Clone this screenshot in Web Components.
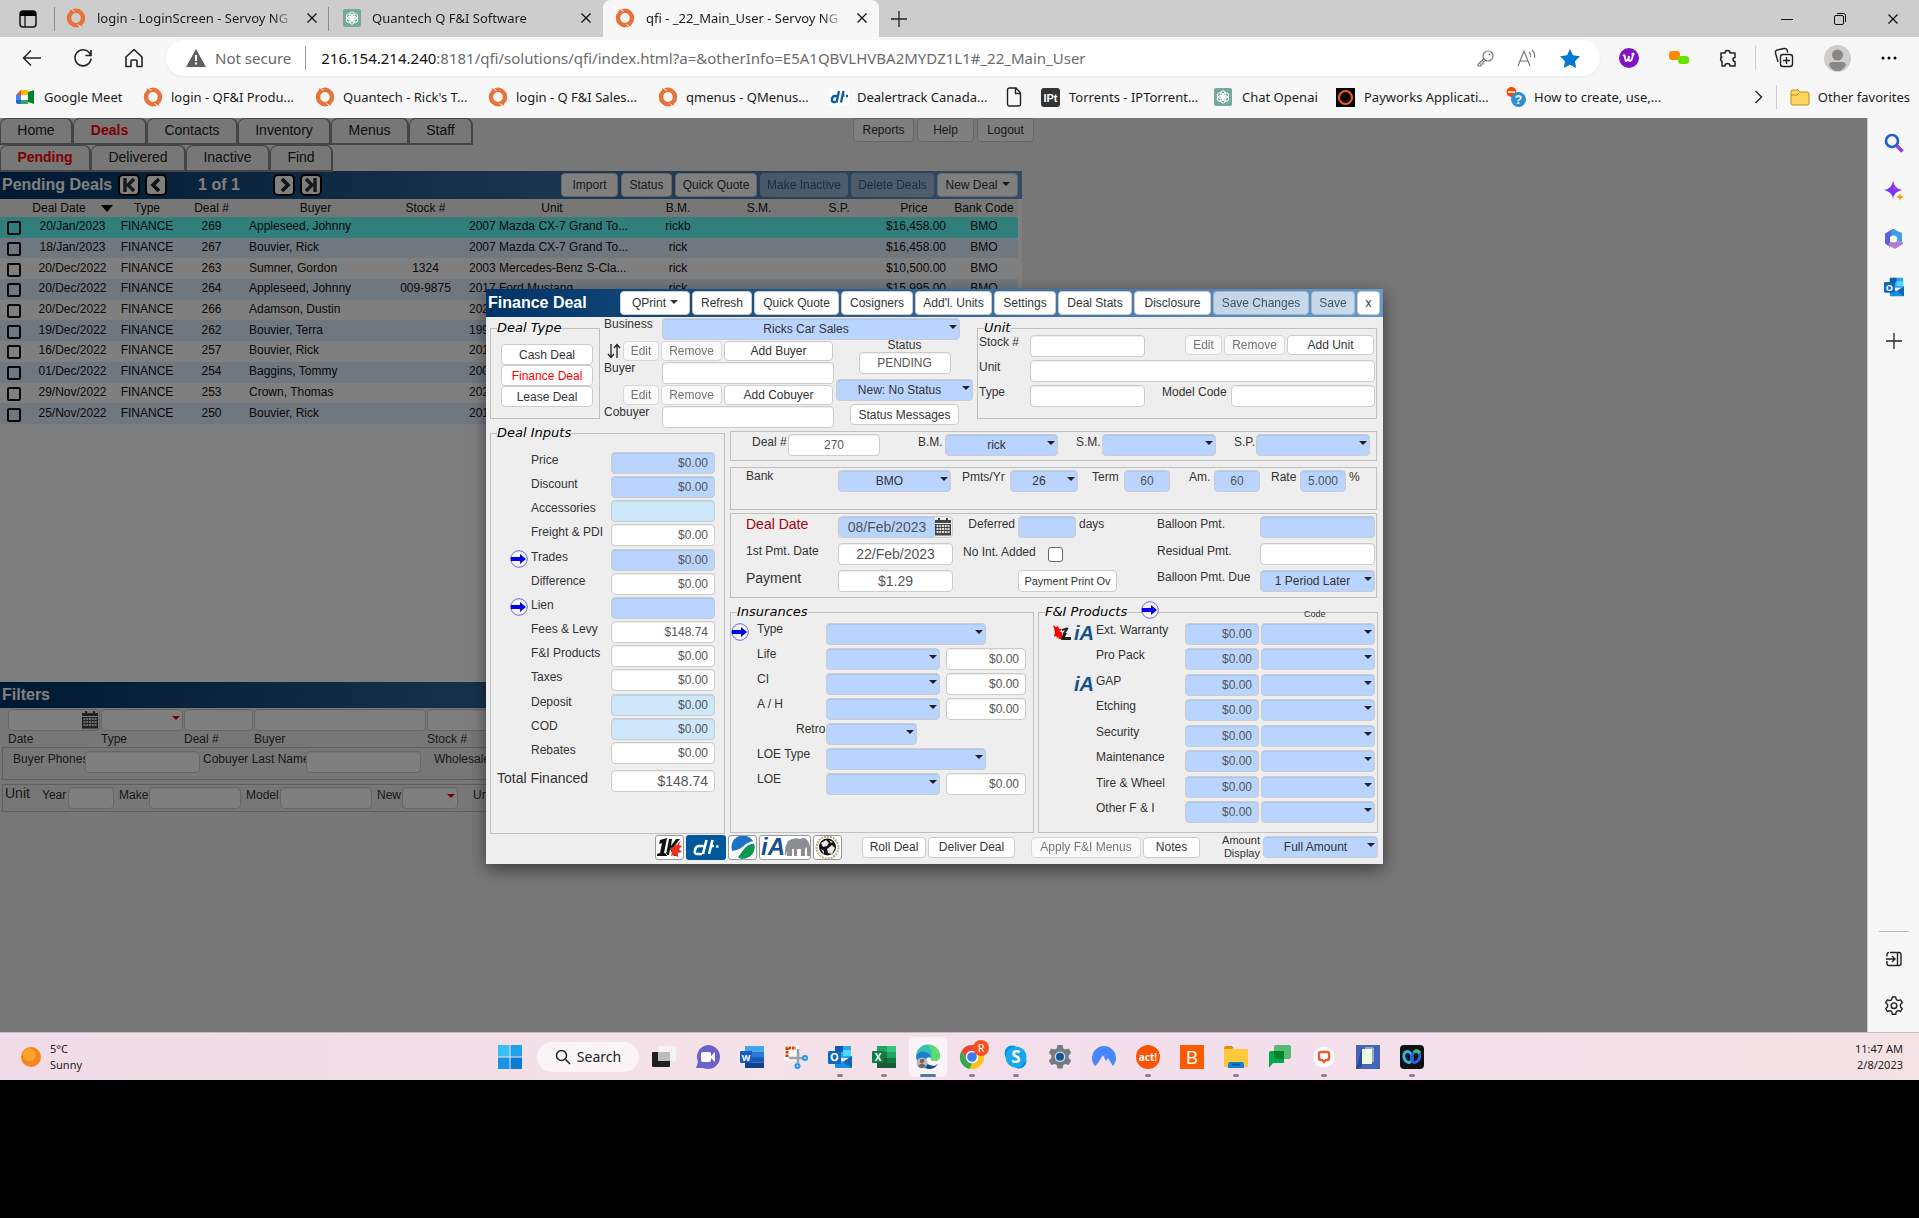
<!DOCTYPE html>
<html lang="en">
<head>
<meta charset="utf-8">
<title>qfi - _22_Main_User - Servoy NG</title>
<style>
    * {
        box-sizing: border-box;
    }

    body {
        margin: 0;
        background: #000;
        font-family: "Liberation Sans", Arial, sans-serif;
        font-size: 12px;
    }

    desktop-screen {
        min-height: 100vh;
    }
</style>
</head>
<body>
<desktop-screen>
    <browser-chrome slot="top"></browser-chrome>
    <deals-page slot="page">
        <finance-dialog></finance-dialog>
    </deals-page>
    <edge-sidebar slot="side"></edge-sidebar>
    <task-bar slot="taskbar"></task-bar>
</desktop-screen>

<script>
// [width, height, svg content]
const ICONS = {
    workspaces: [18, 18, `<rect x="1" y="1" width="16" height="16" rx="3" fill="none" stroke="#111" stroke-width="1.5"/><path d="M1 4a3 3 0 0 1 3-3h10a3 3 0 0 1 3 3v2H1z"/><path d="M6 6v11" stroke="#111" stroke-width="1.3"/>`],
    servoy: [20, 20, `<ellipse cx="10" cy="10" rx="7" ry="7.200" fill="none" stroke="#e8733a" stroke-width="4.400"/><path d="M3.500 1l4 2.500L5 5z" fill="#e8733a"/><path d="M16.500 19l-4-2.500L15 15z" fill="#e8733a"/><path d="M5.500 1.500l3 2M11.500 16.500l3 2" stroke="#f8f0ec" stroke-width="1"/>`],
    openai: [18, 18, `<rect width="18" height="18" rx="2" fill="#74aa9c"/><g fill="none" stroke="#fff" stroke-width="1"><ellipse cx="9" cy="6.4" rx="2.6" ry="3.6"/><ellipse cx="9" cy="6.4" rx="2.6" ry="3.6" transform="rotate(60 9 9)"/><ellipse cx="9" cy="6.4" rx="2.6" ry="3.6" transform="rotate(120 9 9)"/><ellipse cx="9" cy="6.4" rx="2.6" ry="3.6" transform="rotate(180 9 9)"/><ellipse cx="9" cy="6.4" rx="2.6" ry="3.6" transform="rotate(240 9 9)"/><ellipse cx="9" cy="6.4" rx="2.6" ry="3.6" transform="rotate(300 9 9)"/></g>`],
    close: [12, 12, `<path d="M1.500 1.500l9 9M10.500 1.500l-9 9" stroke="#111" stroke-width="1.3"/>`],
    plus: [16, 16, `<path d="M8 0v16M0 8h16" stroke="#222" stroke-width="1.3"/>`],
    minimize: [12, 12, `<path d="M0 6.500h12" stroke="#111"/>`],
    restore: [12, 12, `<rect x=".5" y="2.500" width="9" height="9" rx="1.500" fill="none" stroke="#111"/><path d="M3 .5h6.500a2 2 0 0 1 2 2V9" fill="none" stroke="#111"/>`],
    back: [20, 18, `<path d="M19 9H1.500M9 1.500L1.500 9 9 16.500" fill="none" stroke="#222" stroke-width="1.5"/>`],
    reload: [20, 20, `<path d="M17.500 7A8 8 0 1 0 18 10.500M18 2v5.500h-5.500" fill="none" stroke="#222" stroke-width="1.6"/>`],
    home: [20, 20, `<path d="M2 9l8-7.500L18 9v9.500h-5V13a1 1 0 0 0-1-1h-4a1 1 0 0 0-1 1v5.500H2z" fill="none" stroke="#222" stroke-width="1.6" stroke-linejoin="round"/>`],
    warning: [20, 18, `<path d="M10 0l10 18H0z" fill="#5f5f5f"/><path d="M10 6v6M10 13.500v2" stroke="#fff" stroke-width="2"/>`],
    key: [17, 17, `<circle cx="11" cy="6" r="5" fill="none" stroke="#777" stroke-width="1.2"/><circle cx="12.500" cy="4.500" r="1" fill="#777"/><path d="M7 8.500L1 14.500V16h3v-2h2v-2l2.500-1.500" fill="none" stroke="#777" stroke-width="1.2"/>`],
    readaloud: [20, 18, `<path d="M1 17L7 2l6 15M3 12h8" fill="none" stroke="#777" stroke-width="1.2"/><path d="M12 3q2 2 1.500 5M15 1q3.500 3.500 2.500 8" fill="none" stroke="#777" stroke-width="1.1"/>`],
    star: [20, 19, `<path d="M10 0l3 6.300 7 1-5 4.900 1.200 6.800L10 15.800 3.800 19 5 12.200 0 7.300l7-1z" fill="#0078d4"/>`],
    wappalyzer: [20, 20, `<circle cx="10" cy="10" r="10" fill="#8312c4"/><path d="M4 8q2-2 2 1t1 4q2 0 3-5-1 5 1 5t3-7" fill="none" stroke="#fff" stroke-width="1.8"/><circle cx="14" cy="6" r="1.600" fill="#fff"/>`],
    dots2: [20, 14, `<rect x="0" y="0" width="11" height="9" rx="3" fill="#ff8c00"/><rect x="9" y="5" width="11" height="8" rx="3" fill="#67e300"/>`],
    puzzle: [18, 18, `<path d="M2 4h4a2.500 2.500 0 0 1 5 0h5v4.500a2 2 0 0 0 0 4V17h-5a2.500 2.500 0 0 0-5 0H3v-4.500a2.500 2.500 0 0 1 0-4.500H2z" fill="none" stroke="#222" stroke-width="1.5" stroke-linejoin="round"/>`],
    collections: [20, 20, `<rect x="6.500" y="6.500" width="12" height="12" rx="2.500" fill="none" stroke="#222" stroke-width="1.4"/><path d="M4 14l-2.500-9a2.500 2.500 0 0 1 1.700-3l7-1.500a2.500 2.500 0 0 1 3 2l.5 2M12.500 9v7M9 12.500h7" fill="none" stroke="#222" stroke-width="1.4"/>`],
    avatar: [27, 27, `<circle cx="13.500" cy="13.500" r="13.500" fill="#cfcdcb"/><circle cx="13.500" cy="10" r="5.500" fill="#8a8886"/><path d="M5 20q0-3 4-3h9q4 0 4 3-3 6-8.500 6T5 20z" fill="#8a8886"/>`],
    more: [16, 4, `<circle cx="2" cy="2" r="1.500"/><circle cx="8" cy="2" r="1.500"/><circle cx="14" cy="2" r="1.500"/>`],
    meet: [18, 16, `<path d="M5 1h7v5H5z" fill="#fbbc04"/><path d="M0 6l5-5v5z" fill="#ea4335"/><path d="M0 6h5v5H0z" fill="#4285f4"/><path d="M0 11h5v4H2q-2 0-2-2z" fill="#1967d2"/><path d="M5 11h7v4H5z" fill="#34a853"/><path d="M12 3v10l6 2V1z" fill="#00832d"/><path d="M5 6h7v5H5z" fill="#fff"/>`],
    dealertrack: [20, 18, `<rect width="20" height="18" fill="#fff"/><path d="M10 3L7.500 14.500M8 8H5.500q-2 0-2.500 3t1.500 3H7M14.500 3L12 14.500M13 7.500h2.500M17 8h2" fill="none" stroke="#0a5ca5" stroke-width="2.300"/>`],
    page: [16, 20, `<path d="M1.500 3a2 2 0 0 1 2-2H10l4.500 5v11a2 2 0 0 1-2 2h-9a2 2 0 0 1-2-2zM9.500 1v5.500h5" fill="none" stroke="#222" stroke-width="1.4"/>`],
    ipt: [19, 19, `<rect width="19" height="19" rx="3" fill="#333"/><text x="9.500" y="14" font-family="Liberation Sans" font-size="11" font-weight="bold" fill="#fff" text-anchor="middle">IPt</text>`],
    payworks: [19, 19, `<rect width="19" height="19" fill="#000"/><circle cx="9.500" cy="9.500" r="6.500" fill="none" stroke="#f1592a" stroke-width="2.200"/>`],
    howto: [20, 20, `<circle cx="5.500" cy="5" r="5" fill="#ff4500"/><circle cx="12.500" cy="12.500" r="7.500" fill="#2f8fd0"/><path d="M2 5h7" stroke="#fff" stroke-width="1.600"/><text x="12.500" y="17" font-family="Liberation Sans" font-size="12" font-weight="bold" fill="#fff" text-anchor="middle">?</text>`],
    chevron: [9, 14, `<path d="M1.500 1l6 6-6 6" fill="none" stroke="#222" stroke-width="1.400"/>`],
    folder: [20, 17, `<path d="M1 3q0-2 2-2h5l2 2h7q2 0 2 2v9q0 2-2 2H3q-2 0-2-2z" fill="#ffd75e" stroke="#b98a14"/><path d="M1 6h6l2-2" fill="none" stroke="#b98a14"/>`],
    search: [20, 20, `<circle cx="8" cy="8" r="6" fill="none" stroke="#1a5fd0" stroke-width="2.600"/><path d="M12.500 12.500l6 6" stroke="#8b3fe0" stroke-width="3.400"/>`],
    sparkle: [20, 20, `<path d="M9 0q1 7.500 9 9-8 1.500-9 9-1-7.500-9-9 8-1.500 9-9z" fill="#7a35f0"/><path d="M9 0q1 7.500 9 9H9z" fill="#a336f5"/><path d="M16 12q.5 3.500 4 4-3.500.5-4 4-.5-3.500-4-4 3.500-.5 4-4z" fill="#f0a800"/>`],
    m365: [20, 20, `<path d="M9 0L1 4.500v10L6 18V8l6-4V1z" fill="#5a60d6"/><path d="M9 0l9 4v9l-5-1V8L6 6z" fill="#3aa0e8"/><path d="M6 13l7-1 6 1v2l-8 5-7-4z" fill="#b47fd0"/><circle cx="9.700" cy="10" r="3.500" fill="#f7f7f7"/>`],
    outlook: [24, 24, `<rect x="7" y="1" width="16" height="12" rx="1" fill="#28a8ea"/><path d="M7 1h8v6H7z" fill="#0a5fb4"/><path d="M15 5h8v6h-8z" fill="#50d9ff"/><path d="M7 12l8 5 9-6v11a1 1 0 0 1-1 1H8a1 1 0 0 1-1-1z" fill="#1490df"/><path d="M24 11v12l-9-6z" fill="#1066b5"/><rect y="6" width="13" height="13" rx="1.500" fill="#0f67be"/><text x="6.500" y="16.300" font-family="Open Sans" font-size="11" font-weight="bold" fill="#fff" text-anchor="middle">O</text>`],
    panel: [18, 18, `<path d="M5 2.500h9a2 2 0 0 1 2 2v9a2 2 0 0 1-2 2H4a2 2 0 0 1-2-2V11M2 6.500v-2a2 2 0 0 1 2-2M12.500 2.500v13M1 9h9M7 6l3 3-3 3" fill="none" stroke="#222" stroke-width="1.400"/>`],
    cog: [20, 20, `<path d="M8.300 1h3.400l.6 2.600 1.800 1 2.500-.8 1.700 3-1.900 1.800v2.100l1.900 1.800-1.700 3-2.500-.8-1.800 1-.6 2.600H8.300l-.6-2.600-1.800-1-2.500.8-1.700-3 1.900-1.800V8.600L1.700 6.800l1.700-3 2.500.8 1.800-1z" fill="none" stroke="#222" stroke-width="1.400" stroke-linejoin="round"/><circle cx="10" cy="9.700" r="2.800" fill="none" stroke="#222" stroke-width="1.400"/>`],
    goto: [18, 18, `<circle cx="9" cy="9" r="8.300" fill="#f4f4fa" stroke="#6b6bdc"/><path d="M1 7h9V4l6 5-6 5v-3H1z" fill="#00e"/>`],
    calendar: [16, 18, `<path d="M0 2h16v15.500H0z" fill="#444"/><path d="M3 0h2v3H3zM11 0h2v3h-2z" fill="#444"/><path d="M0 5.500h16" stroke="#fff"/><path d="M1.500 8h13M1.500 11h13M1.500 14h13" stroke="#ddd" stroke-width="1.800" stroke-dasharray="2 .75"/>`],
    swap: [14, 16, `<path d="M4 1v13M1 11l3 3.500L7 11M10 15V2M7 5l3-3.500L13 5" fill="none" stroke="#222" stroke-width="1.300"/>`],
    first: [18, 18, `<path d="M5 2v14M14 3L8 9l6 6" fill="none" stroke="#333" stroke-width="3.400"/>`],
    prev: [18, 18, `<path d="M12 3L6 9l6 6" fill="none" stroke="#222" stroke-width="3.600"/>`],
    next: [18, 18, `<path d="M7 3l6 6-6 6" fill="none" stroke="#222" stroke-width="3.600"/>`],
    last: [18, 18, `<path d="M13 2v14M4 3l6 6-6 6" fill="none" stroke="#333" stroke-width="3.400"/>`],
    firstleaf: [18, 15, `<path d="M0 0l3 2 2-1 1 3 3 0-2 2 2 3-3 0-1 5-2-3-2 1 1-5z" fill="#f00"/><path d="M5 9l4-2v7H6z" fill="#f00"/><path d="M9 4l5-1.500q2 0 1 2L12.500 8H10l2-3-3 1zM10 8h4l-2 4h6v3H8z" fill="#222"/>`],
    ia: [19, 16, `<text x="-1" y="15" font-family="Liberation Sans" font-size="20" font-weight="bold" font-style="italic" fill="#15508f">iA</text>`],
    onek: [25, 21, `<path d="M3 3l7-2-3 15 3 1v2H0v-2l3-1 2-10-3 1zM12 2L9 18h3l1-6 4 7h4l-5-8 7-9h-4l-5 7 1-7z" fill="#111"/><path d="M24 3l-2 5 3 1-3 3 3 3-4 1 0 4-4-2-3 1 1-5-2-3 4-1 1-3 2 1z" fill="#e8301c"/>`],
    dtlogo: [40, 25, `<rect width="40" height="25" rx="1" fill="#00589c"/><path d="M20.500 5L17 19M17.500 11H13q-3 0-4 4t2 4h5M26.500 5L23 19M24.500 11h3.500M30 11.500h2.500" fill="none" stroke="#fff" stroke-width="2.600"/>`],
    wave: [24, 24, `<circle cx="12" cy="12" r="11.500" fill="#1c72c4"/><path d="M1 16Q9 15 15 9q4-3 8-3l.5 3Q19 8 14 13q-5 6-7 9.500Q2 20 1 16z" fill="#fff"/><path d="M8 23q4-9 9-12 4-2 6.500 0 .5 6-4 9.500-5 4-11.500 2.500z" fill="#0b9a48"/>`],
    iaelephant: [49, 22, `<text x="0" y="19" font-family="Liberation Sans" font-size="24" font-weight="bold" font-style="italic" fill="#15508f">iA</text><path d="M27 5q6-4 12-2 5-3 8 2 3 5 2 15h-3V11l-2 2v7h-4v-7h-4v7h-3v-7h-2v7h-5v-6l-1 5h-1q-1-7 3-14z" fill="#8b8f94"/>`],
    globe: [25, 25, `<circle cx="12.500" cy="12.500" r="11" fill="none" stroke="#b5a77b" stroke-width="2" stroke-dasharray="2 1"/><circle cx="12.500" cy="12" r="8.500" fill="#111"/><path d="M6 8l5-3 3 3-2 3-4 1zM12 14l5-4 3 3-3 6-4-1zM14 5l4 2-2 1zM6 14l3 2v3z" fill="#e8e8e8"/>`],
    sun: [20, 20, `<circle cx="10" cy="10" r="10" fill="#f5841f"/><circle cx="8.500" cy="8" r="6.500" fill="#f9a32b"/>`],
    windows: [24, 24, `<path d="M0 0h11.500v11.500H0z" fill="#39bdf3"/><path d="M12.500 0H24v11.500H12.500z" fill="#1fa2e8"/><path d="M0 12.500h11.500V24H0z" fill="#1a94e2"/><path d="M12.500 12.500H24V24H12.500z" fill="#0b7cd6"/>`],
    find: [16, 16, `<circle cx="6.500" cy="6.500" r="5" fill="none" stroke="#222" stroke-width="1.500"/><path d="M10.500 10.500l4.500 4.500" stroke="#222" stroke-width="1.600"/>`],
    taskview: [24, 24, `<rect x="0" y="7" width="18" height="15" rx="1" fill="#1f1f1f"/><rect x="6" y="1" width="18" height="15" rx="1" fill="#f4f4f4"/><path d="M6 7h12v9H6z" fill="#bdbdbd"/>`],
    teams: [24, 24, `<path d="M12 0a12 12 0 1 1 0 24q-3 0-5-1L0 23l2-6A12 12 0 0 1 12 0z" fill="#6a62c8"/><rect x="5" y="7" width="10" height="10" rx="2" fill="#fff"/><path d="M15 11l4-4v10l-4-4z" fill="#fff"/>`],
    word: [24, 24, `<path d="M5 1h19v5.500H5z" fill="#41a5ee"/><path d="M5 6.500h19V12H5z" fill="#2b7cd3"/><path d="M5 12h19v5.500H5z" fill="#185abd"/><path d="M5 17.500h19V23H5z" fill="#103f91"/><rect y="6" width="12" height="12" rx="1" fill="#185abd"/><text x="6" y="15.500" font-family="Open Sans" font-size="9" font-weight="bold" fill="#fff" text-anchor="middle">W</text>`],
    snip: [24, 24, `<rect width="15" height="16" rx="2" fill="#fdf6f4"/><path d="M3 12V3h9" fill="none" stroke="#d83b01" stroke-width="3" stroke-dasharray="2.500 1"/><path d="M14 4v14M5 13h15" stroke="#a0a4aa" stroke-width="2.500"/><circle cx="21" cy="13" r="2" fill="none" stroke="#1a9bea" stroke-width="2"/><circle cx="13.500" cy="21" r="2" fill="none" stroke="#1a9bea" stroke-width="2"/>`],
    excel: [24, 24, `<path d="M5 1h10v6H5z" fill="#21a366"/><path d="M15 1h9v6h-9z" fill="#33c481"/><path d="M5 7h10v6H5z" fill="#107c41"/><path d="M15 7h9v6h-9z" fill="#21a366"/><path d="M5 13h19v10H5z" fill="#185c37"/><path d="M15 13h9v5h-9z" fill="#107c41"/><rect y="6" width="12" height="12" rx="1" fill="#107c41"/><text x="6" y="15.500" font-family="Open Sans" font-size="10" font-weight="bold" fill="#fff" text-anchor="middle">X</text>`],
    edge: [24, 24, `<path d="M0 12A12 12 0 0 1 24 11q0 5-6 5-4 0-3-3 0-5-6-5-7 0-9 4z" fill="#35c1b1"/><path d="M12 0q11 0 12 11 0 5-6 5-4 0-3-3 3-6-3-13z" fill="#5fdc6c"/><path d="M0 12Q3 5 9 7q6 1 6 6-3-2-5 1-1 6 6 9Q2 26 0 12z" fill="#1a7fd2"/><path d="M10 14q-1 6 8 7l4-2q-5 7-12 4-4-5 0-9z" fill="#114a8b"/><circle cx="6" cy="18" r="5.500" fill="#bdbab8"/><circle cx="6" cy="16" r="2.300" fill="#6d6a68"/><path d="M2 21q4-5 8 0-4 4-8 0z" fill="#6d6a68"/>`],
    chrome: [24, 24, `<circle cx="12" cy="12" r="12" fill="#fbc116"/><path d="M1.600 6A12 12 0 0 1 22.400 6H12L7 15z" fill="#ea4335"/><path d="M1.600 6L7 15l5 3-2.500 6A12 12 0 0 1 1.600 6z" fill="#34a853"/><circle cx="12" cy="12" r="6.300" fill="#fff"/><circle cx="12" cy="12" r="4.800" fill="#3b7ded"/><circle cx="21" cy="3" r="8" fill="#f4511e"/><text x="21" y="6.500" font-family="Roboto" font-size="10" fill="#fff" text-anchor="middle">R</text>`],
    skype: [24, 24, `<circle cx="8" cy="8" r="7.500" fill="#0a8ede"/><circle cx="15" cy="16" r="7.500" fill="#0a8ede"/><circle cx="12" cy="12" r="10.500" fill="#16a8ee"/><text x="12" y="18" font-family="Open Sans" font-size="17" font-weight="bold" fill="#fff" text-anchor="middle">S</text>`],
    settings: [24, 24, `<path d="M9.500 0h5l.8 3.400 2 1.100 3.400-1 2.500 4.300-2.500 2.500v2.800l2.500 2.500-2.500 4.400-3.400-1-2 1.100-.8 3.400h-5l-.8-3.400-2-1.100-3.400 1L.8 15.600l2.500-2.500v-2.800L.8 7.800l2.500-4.300 3.400 1 2-1.100z" fill="#737b84"/><circle cx="12" cy="11.800" r="5.300" fill="#d5dbe1"/><circle cx="12" cy="11.800" r="4" fill="#11569c"/>`],
    nord: [24, 20, `<path d="M3 19A12 12 0 1 1 21 19l-5-8-2 3-3-6-5 8z" fill="#4687ff"/>`],
    act: [24, 24, `<circle cx="12" cy="12" r="12" fill="#ff5200"/><text x="12" y="15.500" font-family="Open Sans" font-size="10" font-weight="bold" fill="#fff" text-anchor="middle">act!</text>`],
    bold: [24, 24, `<rect width="24" height="24" fill="#ff5a00"/><text x="12" y="18.500" font-family="Open Sans" font-size="19" fill="#fff" text-anchor="middle">B</text>`],
    explorer: [24, 22, `<path d="M0 2q0-2 2-2h6l2 2h-1l-2 3H0z" fill="#d9930d"/><rect y="3" width="24" height="18" rx="1" fill="#ffca3a"/><path d="M4 22v-4q0-2 2-2h12q2 0 2 2v4z" fill="#1580d6"/><path d="M8 18.500h8" stroke="#0b4f93" stroke-width="1.500"/>`],
    gchat: [22, 24, `<path d="M0 8q0-2 2-2h13v12H4l-4 5z" fill="#00ac47"/><rect x="5" y="0" width="17" height="14" rx="2" fill="#5bb974"/><path d="M5 6h10v8H5z" fill="#00832d"/>`],
    jabber: [22, 22, `<circle cx="11" cy="11" r="10.500" fill="#fff"/><path d="M8 6h6q2 0 2 2v4q0 2-2 2h-1l-2 2-2-2H8q-2 0-2-2V8q0-2 2-2z" fill="none" stroke="#f05a28" stroke-width="2.400"/>`],
    notebook: [24, 24, `<rect width="24" height="24" fill="#4466b8"/><path d="M0 24L6 2v20z" fill="#2c4a90"/><rect x="6" y="4" width="10" height="15" fill="#f0fbe4"/><path d="M9 3h8v14" fill="none" stroke="#e3edd8"/>`],
    webex: [24, 24, `<rect width="24" height="24" rx="4" fill="#111"/><ellipse cx="8" cy="12" rx="4" ry="5.500" fill="none" stroke="#2fb4e9" stroke-width="3" transform="rotate(-18 8 12)"/><ellipse cx="15.500" cy="12" rx="4" ry="5.500" fill="none" stroke="#2b62e0" stroke-width="3" transform="rotate(18 15.500 12)"/><path d="M14 7q3-3 6 1" fill="none" stroke="#37cf6b" stroke-width="3"/>`]
};

const BUTTON_CSS = `
    button {
        display: block;
        width: 100%;
        height: 100%;
        padding: 0;
        border: 1px solid #ccc;
        border-radius: 4px;
        background: #fff;
        color: #333;
        font: inherit;
        white-space: nowrap;
        overflow: hidden;
    }
`;

// small base class, every element only gives its css and its html
class BaseElement extends HTMLElement {
    connectedCallback() {
        if (this.shadowRoot) return;
        const root = this.attachShadow({ mode: "open" });
        const template = document.createElement("template");
        template.innerHTML = `<style>* { box-sizing: border-box; }${this.css()}</style>${this.html()}`;
        root.appendChild(template.content.cloneNode(true));
    }

    attr(name, fallback = "") {
        return this.hasAttribute(name) ? this.getAttribute(name) : fallback;
    }
}

class AppIcon extends BaseElement {
    css() {
        return `:host { display: inline-block; flex: none; line-height: 0; } svg { display: block; overflow: visible; }`;
    }
    html() {
        const [w, h, body] = ICONS[this.attr("name")];
        const width = this.attr("width", w);
        return `<svg width="${width}" height="${Math.round((h * width) / w)}" viewBox="0 0 ${w} ${h}" aria-hidden="true">${body}</svg>`;
    }
}
customElements.define("app-icon", AppIcon);

class DesktopScreen extends BaseElement {
    css() {
        return `
            :host { display: grid; grid-template-rows: auto 1fr 48px; padding-bottom: 138px; }
            .middle { display: flex; min-height: 0; }
            ::slotted([slot="page"]) { flex: 1; min-width: 0; }
        `;
    }
    html() {
        return `<slot name="top"></slot><div class="middle"><slot name="page"></slot><slot name="side"></slot></div><slot name="taskbar"></slot>`;
    }
}
customElements.define("desktop-screen", DesktopScreen);

/* ---------- browser ---------- */

class BrowserTab extends BaseElement {
    css() {
        return `
            :host { display: flex; align-items: center; gap: 11px; height: 37px; padding: 0 9px 2px 13px; width: 274px; color: #1b1b1b; border-left: 1px solid transparent; }
            :host([active]) { background: #f7f7f7; border-radius: 8px 8px 0 0; width: 276px; padding-left: 11px; }
            .title { flex: 1; overflow: hidden; white-space: nowrap; -webkit-mask-image: linear-gradient(90deg, #000 90%, transparent); }
            button { border: 0; padding: 0; background: none; display: flex; width: 16px; justify-content: center; }
        `;
    }
    html() {
        return `<app-icon name="${this.attr("icon")}"></app-icon><span class="title"><slot></slot></span><button aria-label="Close tab"><app-icon name="close"></app-icon></button>`;
    }
}
customElements.define("browser-tab", BrowserTab);

class FavLink extends BaseElement {
    css() {
        return `
            :host { display: block; flex: none; }
            a { display: flex; align-items: center; gap: 8px; color: #1b1b1b; text-decoration: none; white-space: nowrap; }
            app-icon { width: 20px; }
        `;
    }
    html() {
        return `<a href="#"><app-icon name="${this.attr("icon")}"></app-icon><slot></slot></a>`;
    }
}
customElements.define("fav-link", FavLink);

class BrowserChrome extends BaseElement {
    css() {
        return `
            :host { display: block; background: #f7f7f7; font-family: "Noto Sans", "Open Sans", sans-serif; font-size: 13px; }
            .tabs { display: flex; align-items: flex-end; height: 37px; background: #cdcdcd; }
            .tabs > app-icon { align-self: center; }
            .sep { width: 1px; height: 24px; background: #8b8b8b; align-self: center; }
            .window { display: flex; gap: 41px; margin-left: auto; padding-right: 20px; align-self: center; align-items: center; }
            .bar { display: flex; align-items: center; height: 42px; padding: 0 22px; }
            .bar > app-icon { margin-right: 31px; }
            .address { display: flex; align-items: center; flex: 1; height: 36px; border-radius: 18px; background: #fff; padding: 0 20px; box-shadow: 0 1px 3px #0001; }
            .address .note { margin: 0 14px 0 9px; color: #666; font-size: 15px; }
            .address .sep { background: #999; margin-right: 15px; }
            .url { flex: 1; font-size: 15px; color: #6b6b6b; white-space: nowrap; }
            .url b { font-weight: normal; color: #111; }
            .address app-icon { margin-left: 23px; }
            .address > app-icon:first-child { margin-left: 0; }
            .tools { display: flex; align-items: center; padding-left: 19px; gap: 30px; }
            .tools .sep { background: #ccc; margin: 0 -12px; }
            .favs { display: flex; align-items: center; height: 39px; padding: 0 9px 3px 16px; }
            .favs > .right { display: flex; align-items: center; gap: 13px; margin-left: auto; }
            .favs .sep { background: #ccc; }
        `;
    }
    html() {
        const favs = [
            ["meet", "Google Meet", 127],
            ["servoy", "login - QF&amp;I Produ...", 172],
            ["servoy", "Quantech - Rick's T...", 173],
            ["servoy", "login - Q F&amp;I Sales...", 170],
            ["servoy", "qmenus - QMenus...", 171],
            ["dealertrack", "Dealertrack Canada...", 177],
            ["page", "", 35],
            ["ipt", "Torrents - IPTorrent...", 173],
            ["openai", "Chat Openai", 122],
            ["payworks", "Payworks Applicati...", 170],
            ["howto", "How to create, use,...", 160]
        ];
        return `
            <div class="tabs">
                <app-icon name="workspaces" style="margin: 0 17px 0 19px"></app-icon>
                <span class="sep"></span>
                <browser-tab icon="servoy" style="margin-right: -1px; padding-left: 10px">login - LoginScreen - Servoy NG</browser-tab>
                <span class="sep"></span>
                <browser-tab icon="openai">Quantech Q F&amp;I Software</browser-tab>
                <browser-tab icon="servoy" active>qfi - _22_Main_User - Servoy NG</browser-tab>
                <app-icon name="plus" style="margin-left: 12px"></app-icon>
                <div class="window"><app-icon name="minimize"></app-icon><app-icon name="restore"></app-icon><app-icon name="close"></app-icon></div>
            </div>
            <div class="bar">
                <app-icon name="back"></app-icon><app-icon name="reload"></app-icon><app-icon name="home" style="margin-right: 22px"></app-icon>
                <div class="address">
                    <app-icon name="warning"></app-icon><span class="note">Not secure</span><span class="sep"></span>
                    <span class="url"><b>216.154.214.240</b>:8181/qfi/solutions/qfi/index.html?a=&amp;otherInfo=E5A1QBVLHVBA2MYDZ1L1#_22_Main_User</span>
                    <app-icon name="key"></app-icon><app-icon name="readaloud"></app-icon><app-icon name="star"></app-icon>
                </div>
                <div class="tools">
                    <app-icon name="wappalyzer"></app-icon><app-icon name="dots2"></app-icon><app-icon name="puzzle"></app-icon><span class="sep"></span>
                    <app-icon name="collections"></app-icon><app-icon name="avatar"></app-icon><app-icon name="more"></app-icon>
                </div>
            </div>
            <div class="favs">
                ${favs.map(([icon, text, w]) => `<fav-link icon="${icon}" style="width: ${w}px">${text}</fav-link>`).join("")}
                <div class="right"><app-icon name="chevron"></app-icon><span class="sep"></span><fav-link icon="folder">Other favorites</fav-link></div>
            </div>
        `;
    }
}
customElements.define("browser-chrome", BrowserChrome);

class EdgeSidebar extends BaseElement {
    css() {
        return `
            :host { display: flex; flex-direction: column; align-items: center; gap: 28px; width: 52px; padding: 15px 0 16px; background: #f7f7f7; border-left: 1px solid #ccc; }
            .line { width: 30px; border-top: 1px solid #bbb; margin-top: auto; margin-bottom: -10px; }
        `;
    }
    html() {
        return `
            <app-icon name="search"></app-icon><app-icon name="sparkle"></app-icon><app-icon name="m365"></app-icon><app-icon name="outlook" width="20"></app-icon>
            <app-icon name="plus" style="margin-top: 8px"></app-icon>
            <span class="line"></span>
            <app-icon name="panel"></app-icon><app-icon name="cog"></app-icon>
        `;
    }
}
customElements.define("edge-sidebar", EdgeSidebar);

class TaskBar extends BaseElement {
    css() {
        return `
            :host { display: flex; align-items: center; padding: 0 16px 0 21px; border-top: 1px solid #cbb9c0; background: linear-gradient(90deg, #f0dce6, #f5e1e8 40%, #f2dfec 62%, #f5e2e5); font-family: "Noto Sans", "Open Sans", sans-serif; font-size: 11px; line-height: 16px; color: #222; }
            .weather, .clock { flex: 1; display: flex; align-items: center; gap: 9px; white-space: pre; }
            .clock { justify-content: flex-end; text-align: right; }
            .apps { display: flex; align-items: center; margin-left: 8px; }
            .search { display: flex; align-items: center; justify-content: center; gap: 6px; width: 102px; height: 30px; margin: 0 3px 0 15px; border: 0; border-radius: 15px; background: #fbf5f7; font: inherit; font-size: 14px; color: #222; }
            .app { display: flex; flex-direction: column; align-items: center; justify-content: center; width: 44px; height: 40px; position: relative; }
            .app.on::after { content: ""; position: absolute; bottom: 0; width: 6px; height: 3px; border-radius: 2px; background: #8d8086; }
            .app.active { background: #fbf3f7; border-radius: 4px; width: 38px; margin: 0 3px; }
            .app.active::after { width: 16px; background: #4b7bb0; }
        `;
    }
    html() {
        const apps = [
            ["taskview"], ["teams"], ["word"], ["snip"], ["outlook", "on"], ["excel", "on"], ["edge", "on active"], ["chrome", "on"],
            ["skype", "on"], ["settings"], ["nord"], ["act", "on"], ["bold"], ["explorer", "on"], ["gchat"], ["jabber", "on"], ["notebook"], ["webex", "on"]
        ];
        return `
            <div class="weather"><app-icon name="sun"></app-icon><span>5°C\nSunny</span></div>
            <div class="apps">
                <app-icon name="windows"></app-icon>
                <button class="search"><app-icon name="find"></app-icon>Search</button>
                ${apps.map(([name, state = ""]) => `<div class="app ${state}"><app-icon name="${name}"></app-icon></div>`).join("")}
            </div>
            <div class="clock"><span>11:47 AM\n2/8/2023</span></div>
        `;
    }
}
customElements.define("task-bar", TaskBar);

/* ---------- form parts ---------- */

class QButton extends BaseElement {
    css() {
        return `
            ${BUTTON_CSS}
            :host { display: block; flex: none; height: 24px; }
            :host([off]) button { opacity: 0.65; }
            :host([pale]) button { background: #fff9; color: #345; }
            :host([warn]) button { color: #f00; }
            :host([caret]) button::after { content: ""; display: inline-block; margin-left: 4px; vertical-align: 3px; border: 4px solid transparent; border-top-color: currentColor; border-bottom: 0; }
        `;
    }
    html() {
        return `<button ${this.hasAttribute("off") ? "disabled" : ""}><slot></slot></button>`;
    }
}
customElements.define("q-button", QButton);

// label + text box, or label + drop-down with type="select"
class QField extends BaseElement {
    css() {
        return `
            :host { display: flex; align-items: flex-start; flex: none; color: #333; }
            label { width: var(--label, auto); line-height: var(--line, 16px); white-space: nowrap; flex: none; }
            :host([label-right]) label { text-align: right; padding-right: 3px; }
            :host([stack]) { flex-direction: column-reverse; }
            .box { display: grid; width: var(--box, 115px); height: 22px; flex: none; }
            :host([stack]) .box { width: 100%; }
            input, select {
                grid-area: 1 / 1; width: 100%; min-width: 0; height: 100%; margin: 0; padding: 0 6px;
                border: 1px solid #ccc; border-radius: 4px; background: #fff; color: #555; font: inherit;
                box-shadow: inset 0 1px 1px #00000013; text-align: var(--align, right); appearance: none;
            }
            select { text-align: center; text-align-last: center; color: #333; padding-right: 14px; padding-left: 4px; }
            :host([tone="blue"]) :is(input, select) { background: #b9d5ff; }
            :host([tone="sky"]) :is(input, select) { background: #cce8fa; }
            :host([big]) label, :host([big]) input, :host([big-value]) input { font-size: 14px; }
            .caret { grid-area: 1 / 1; place-self: center end; margin: 0 3px 4px 0; border: 4px solid transparent; border-top-color: var(--caret, #222); border-bottom: 0; pointer-events: none; }
            app-icon { grid-area: 1 / 1; place-self: center end; margin-right: 1px; }
            .after { line-height: var(--line, 16px); padding-left: 3px; }
            :host([calendar]) .box { border: 1px solid #ccc; border-radius: 4px; }
            :host([calendar]) input { width: calc(100% - 17px); border: 0; border-radius: 3px 0 0 3px; padding: 0 2px; }
        `;
    }
    html() {
        const label = this.attr("label");
        const name = label || this.attr("name", "field");
        const value = this.attr("value");
        const control = this.getAttribute("type") === "select"
            ? `<select id="box" aria-label="${name}"><option>${value}</option></select><span class="caret"></span>`
            : `<input id="box" aria-label="${name}" value="${value}">`;
        return `
            ${label ? `<label for="box">${label}</label>` : ""}
            <div class="box">${control}${this.hasAttribute("calendar") ? `<app-icon name="calendar"></app-icon>` : ""}</div>
            ${this.hasAttribute("after") ? `<span class="after">${this.attr("after")}</span>` : ""}
        `;
    }
}
customElements.define("q-field", QField);

class QGroup extends BaseElement {
    css() {
        return `
            :host { display: flex; min-width: 0; }
            fieldset { flex: 1; min-width: 0; margin: 0; padding: 0; border: 1px solid #c0c0c0; }
            legend { margin-left: 6px; padding: 0; font: italic 13px/14px "DejaVu Sans", Verdana, sans-serif; color: #000; }
        `;
    }
    html() {
        const title = this.attr("title-text");
        return `<fieldset>${title ? `<legend>${title}</legend>` : ""}<slot></slot></fieldset>`;
    }
}
customElements.define("q-group", QGroup);

/* ---------- deals list ---------- */

class TabStrip extends BaseElement {
    css() {
        return `
            :host { display: flex; height: 27px; font-size: 14px; }
            button { padding: 0 0 2px; height: 27px; border: 2px solid #8a8a8a; border-top-width: 1px; border-left-width: 1px; border-radius: 7px 7px 0 0; background: #eee; color: #222; font: inherit; }
            button.on { color: #f00; font-weight: bold; }
        `;
    }
    html() {
        const on = this.attr("selected");
        return this.attr("tabs").split(",").map(item => {
            const [text, w] = item.split(":");
            return `<button class="${text === on ? "on" : ""}" style="width: ${w}px">${text}</button>`;
        }).join("");
    }
}
customElements.define("tab-strip", TabStrip);

class DealsTable extends BaseElement {
    css() {
        return `
            :host { display: block; background: #fff; }
            table { width: 1018px; height: 225px; table-layout: fixed; border-collapse: collapse; color: #111; }
            th { height: 18px; font-weight: normal; background: #eee; }
            th, td { padding: 0; text-align: center; white-space: nowrap; line-height: 16px; }
            td { padding-bottom: 2px; }
            td:first-child { padding: 0; }
            tr:nth-child(even) td { background: #dfeeff; }
            tbody tr:first-child td { background: #60fffa; }
            td.left { text-align: left; padding-left: 3px; }
            td.money { text-align: right; padding-right: 4px; }
            input { appearance: none; display: block; width: 14px; height: 14px; margin: 2px 0 0 7px; border: 2px solid #111; border-radius: 2px; background: none; }
            .sort { display: inline-block; margin-left: 15px; border: 6px solid transparent; border-top: 7px solid #000; border-bottom: 0; }
        `;
    }
    html() {
        const cols = [28, 89, 60, 69, 139, 81, 172, 80, 82, 78, 72, 68];
        const heads = ["", `Deal Date<span class="sort"></span>`, "Type", "Deal #", "Buyer", "Stock #", "Unit", "B.M.", "S.M.", "S.P.", "Price", "Bank Code"];
        const rows = [
            ["20/Jan/2023", 269, "Appleseed, Johnny", "", "2007 Mazda CX-7 Grand To...", "rickb", "$16,458.00"],
            ["18/Jan/2023", 267, "Bouvier, Rick", "", "2007 Mazda CX-7 Grand To...", "rick", "$16,458.00"],
            ["20/Dec/2022", 263, "Sumner, Gordon", "1324", "2003 Mercedes-Benz S-Cla...", "rick", "$10,500.00"],
            ["20/Dec/2022", 264, "Appleseed, Johnny", "009-9875", "2017 Ford Mustang", "rick", "$15,995.00"],
            ["20/Dec/2022", 266, "Adamson, Dustin", "", "202", "", ""],
            ["19/Dec/2022", 262, "Bouvier, Terra", "", "199", "", ""],
            ["16/Dec/2022", 257, "Bouvier, Rick", "", "201", "", ""],
            ["01/Dec/2022", 254, "Baggins, Tommy", "", "200", "", ""],
            ["29/Nov/2022", 253, "Crown, Thomas", "", "202", "", ""],
            ["25/Nov/2022", 250, "Bouvier, Rick", "", "201", "", ""]
        ];
        return `
            <table>
                <colgroup>${cols.map(w => `<col style="width: ${w}px">`).join("")}</colgroup>
                <thead><tr>${heads.map(h => `<th>${h}</th>`).join("")}</tr></thead>
                <tbody>
                    ${rows.map(([date, deal, buyer, stock, unit, bm, price]) => `
                        <tr>
                            <td><input type="checkbox" aria-label="Select deal ${deal}"></td>
                            <td>${date}</td><td>FINANCE</td><td>${deal}</td>
                            <td class="left">${buyer}</td><td>${stock}</td><td class="left">${unit}</td>
                            <td>${bm}</td><td></td><td></td><td class="money">${price}</td><td>${price ? "BMO" : ""}</td>
                        </tr>`).join("")}
                </tbody>
            </table>
        `;
    }
}
customElements.define("deals-table", DealsTable);

class DealFilters extends BaseElement {
    css() {
        return `
            :host { display: block; }
            .row { display: flex; gap: 1px; padding: 1px 0 0 8px; height: 39px; }
            .line { display: flex; }
            .unit { width: 32px; font-size: 14px; line-height: 12px; color: #333; }
            q-group { margin: 0 2px; }
            q-field { --caret: #e00; --line: 16px; }
        `;
    }
    html() {
        return `
            <div class="row">
                <q-field stack calendar label="Date" style="width: 92px"></q-field>
                <q-field stack type="select" label="Type" style="width: 82px"></q-field>
                <q-field stack label="Deal #" style="width: 69px"></q-field>
                <q-field stack label="Buyer" style="width: 172px"></q-field>
                <q-field stack label="Stock #" style="width: 90px"></q-field>
            </div>
            <q-group>
                <div class="line" style="padding: 3px 0 6px 10px; gap: 3px">
                    <q-field label="Buyer Phones" style="--label: 72px"></q-field>
                    <q-field label="Cobuyer Last Name" style="--label: 103px"></q-field>
                    <q-field label="Wholesale" style="--label: 70px; margin-left: 10px"></q-field>
                </div>
            </q-group>
            <q-group style="margin-top: 4px">
                <div class="line" style="padding: 2px 0 2px 2px; gap: 5px">
                    <span class="unit">Unit</span>
                    <q-field label="Year" style="--label: 26px; --box: 46px"></q-field>
                    <q-field label="Make" style="--label: 30px; --box: 92px"></q-field>
                    <q-field label="Model" style="--label: 34px; --box: 92px"></q-field>
                    <q-field type="select" label="New" style="--label: 25px; --box: 56px"></q-field>
                    <q-field label="Unit #" style="--label: 40px; margin-left: 10px"></q-field>
                </div>
            </q-group>
        `;
    }
}
customElements.define("deal-filters", DealFilters);

class DealsPage extends BaseElement {
    css() {
        return `
            :host { display: block; position: relative; background: #eee; color: #222; overflow: hidden; }
            .top { display: flex; gap: 3px; width: 1034px; }
            .top tab-strip { margin-right: auto; }
            .main { width: 1022px; }
            .bar { display: flex; align-items: center; height: 28px; padding: 0 4px 0 2px; gap: 3px; background: linear-gradient(100deg, #036, #6699cc); color: #fff; }
            h2 { margin: 0; font-size: 16px; width: 112px; }
            .pager { display: flex; width: 22px; height: 22px; margin: 0 1px; padding: 0; align-items: center; justify-content: center; border: 2px solid #000; border-radius: 5px; background: #fff; }
            .count { width: 98px; text-align: center; font-size: 16px; font-weight: bold; padding-right: 2px; }
            .list { min-height: 483px; background: #fff; }
            .backdrop { position: absolute; inset: 0; background: #00000080; }
            ::slotted(finance-dialog) { position: absolute; left: 486px; top: 171px; }
        `;
    }
    html() {
        return `
            <div class="top">
                <tab-strip selected="Deals" tabs="Home:73,Deals:74,Contacts:91,Inventory:93,Menus:78,Staff:64"></tab-strip>
                <q-button style="width: 61px">Reports</q-button><q-button style="width: 57px">Help</q-button><q-button style="width: 57px">Logout</q-button>
            </div>
            <tab-strip style="height: 26px" selected="Pending" tabs="Pending:91,Delivered:95,Inactive:84,Find:63"></tab-strip>
            <div class="main">
                <div class="bar">
                    <h2>Pending Deals</h2>
                    <button class="pager" aria-label="First"><app-icon name="first"></app-icon></button>
                    <button class="pager" aria-label="Previous"><app-icon name="prev"></app-icon></button>
                    <span class="count">1 of 1</span>
                    <button class="pager" aria-label="Next"><app-icon name="next"></app-icon></button>
                    <button class="pager" aria-label="Last"><app-icon name="last"></app-icon></button>
                    <q-button style="width: 57px; margin-left: auto">Import</q-button>
                    <q-button style="width: 51px">Status</q-button>
                    <q-button style="width: 82px">Quick Quote</q-button>
                    <q-button pale off style="width: 88px">Make Inactive</q-button>
                    <q-button pale off style="width: 83px">Delete Deals</q-button>
                    <q-button caret style="width: 81px">New Deal</q-button>
                </div>
                <div class="list"><deals-table></deals-table></div>
                <div class="bar" style="height: 26px"><h2>Filters</h2></div>
                <deal-filters></deal-filters>
            </div>
            <div class="backdrop"></div>
            <slot></slot>
        `;
    }
}
customElements.define("deals-page", DealsPage);

/* ---------- finance deal ---------- */

class FinanceDialog extends BaseElement {
    css() {
        return `
            :host { display: block; width: 897px; background: #eee; color: #333; box-shadow: 0 5px 15px #00000080; }
            header { display: flex; align-items: center; gap: 2px; height: 28px; padding: 0 3px 0 2px; background: linear-gradient(90deg, #036, #6699cc); }
            h2 { flex: 1; margin: 0; font-size: 16px; color: #fff; }
            .body { padding: 1px 5px 0 4px; }
            .top { display: flex; gap: 4px; margin-bottom: -3px; height: 110px; }
            .type { width: 110px; height: 98px; margin-top: 3px; }
            .type q-button { height: 21px; margin: 0 6px 0 10px; }
            .middle { width: 369px; }
            .people { display: flex; gap: 2px; margin-top: 1px; }
            .buyers { width: 230px; display: flex; flex-direction: column; gap: 1px; }
            .acts { display: flex; gap: 2px; padding-left: 19px; }
            .acts q-button { height: 20px; }
            .acts app-icon { margin: 2px 0 0 -16px; }
            .status { flex: 1; display: flex; flex-direction: column; align-items: center; }
            .status label { line-height: 8px; margin-bottom: 3px; }
            .unit { flex: 1; height: 98px; margin: 3px 1px 0 0; }
            .unit .row { display: flex; gap: 2px; padding-left: 1px; margin-bottom: 3px; }
            .unit q-button { height: 20px; }
            .unit q-field { --line: 14px; --label: 51px; }
            .work { display: flex; gap: 5px; }
            .inputs { width: 235px; height: 408px; margin-top: 1px; }
            .inputs .list { display: flex; flex-direction: column; justify-content: space-between; height: 330px; padding: 12px 0 6px; }
            .inputs .row { display: flex; gap: 3px; }
            .inputs .row app-icon { margin-top: 1px; }
            .slot { display: flex; flex: none; justify-content: flex-end; }
            .right { flex: 1; display: flex; flex-direction: column; }
            .right > q-group { margin-right: 1px; }
            .ids { display: grid; grid-template-columns: 166px 158px 158px auto; padding: 2px 0 4px 21px; }
            .bank { display: grid; grid-template-columns: 216px 130px 97px 82px auto; padding: 2px 0 17px 15px; }
            .pay { display: grid; grid-template-columns: 217px 194px auto; row-gap: 5px; padding: 2px 0 5px 15px; }
            .pay > * { height: 22px; }
            .pay q-field { --label: 92px; }
            .pay q-field.third { --label: 103px; }
            .check { display: flex; gap: 12px; }
            .check label { line-height: 18px; }
            .check input { appearance: none; margin: 4px 0 0; width: 15px; height: 15px; border: 1px solid #666; border-radius: 3px; background: #fff; }
            .lower { display: flex; gap: 4px; margin-top: 7px; height: 228px; }
            .ins { width: 304px; }
            .ins .list, .fni .list { display: flex; flex-direction: column; gap: 3px; padding-top: 4px; }
            .ins .row { display: flex; gap: 6px; padding-left: 26px; }
            .ins .row app-icon { margin: 0 2px 0 -26px; }
            .ins q-field { --label: 69px; --line: 12px; --box: 114px; }
            .fni { flex: 1; position: relative; }
            .fni .list { height: 204px; justify-content: space-between; gap: 0; }
            .fni .row { display: flex; gap: 2px; }
            .fni .slot { width: 55px; gap: 4px; align-items: flex-start; padding-top: 2px; }
            .fni q-field { --line: 15px; }
            .over { position: absolute; }
            footer { display: flex; align-items: center; gap: 2px; height: 30px; padding: 0 5px 4px 169px; }
            footer q-button { height: 21px; }
            .logo { display: flex; align-items: center; justify-content: center; height: 25px; padding: 0; border: 1px solid #999; border-radius: 3px; background: #fff; overflow: hidden; }
            .logo.plain { border: 0; }
            .amount { font-size: 11px; line-height: 13px; text-align: right; margin-left: auto; white-space: pre; padding-right: 1px; }
        `;
    }

    inputRows() {
        const rows = [
            ["Price", "$0.00", "blue"], ["Discount", "$0.00", "blue"], ["Accessories", "", "sky"], ["Freight &amp; PDI", "$0.00", ""],
            ["Trades", "$0.00", "blue", true], ["Difference", "$0.00", ""], ["Lien", "", "blue", true], ["Fees &amp; Levy", "$148.74", ""],
            ["F&amp;I Products", "$0.00", ""], ["Taxes", "$0.00", ""], ["Deposit", "$0.00", "sky"], ["COD", "$0.00", "sky"], ["Rebates", "$0.00", ""]
        ];
        return rows.map(([label, value, tone, arrow]) => `
            <div class="row">
                <span class="slot" style="width: 37px">${arrow ? `<app-icon name="goto"></app-icon>` : ""}</span>
                <q-field label="${label}" value="${value}" tone="${tone}" style="--label: 80px; --box: 104px"></q-field>
            </div>`).join("");
    }

    insuranceRow(label, value) {
        return `
            <div class="row">
                <q-field type="select" tone="blue" label="${label}"></q-field>
                <q-field name="${label} amount" value="${value}" style="--box: 80px"></q-field>
            </div>`;
    }

    productRows() {
        const names = ["Ext. Warranty", "Pro Pack", "GAP", "Etching", "Security", "Maintenance", "Tire &amp; Wheel", "Other F &amp; I"];
        const logos = {
            0: `<app-icon name="firstleaf"></app-icon><app-icon name="ia"></app-icon>`,
            2: `<app-icon name="ia"></app-icon>`
        };
        return names.map((name, i) => `
            <div class="row">
                <span class="slot">${logos[i] || ""}</span>
                <q-field label="${name}" value="$0.00" tone="blue" style="--label: 89px; --box: 74px"></q-field>
                <q-field type="select" name="${name} code" tone="blue" style="--box: 114px"></q-field>
            </div>`).join("");
    }

    html() {
        return `
            <header>
                <h2>Finance Deal</h2>
                <q-button caret style="width: 70px">QPrint</q-button>
                <q-button style="width: 60px">Refresh</q-button>
                <q-button style="width: 85px">Quick Quote</q-button>
                <q-button style="width: 72px">Cosigners</q-button>
                <q-button style="width: 77px">Add'l. Units</q-button>
                <q-button style="width: 62px">Settings</q-button>
                <q-button style="width: 74px">Deal Stats</q-button>
                <q-button style="width: 77px">Disclosure</q-button>
                <q-button off style="width: 96px">Save Changes</q-button>
                <q-button off style="width: 44px">Save</q-button>
                <q-button style="width: 23px">x</q-button>
            </header>
            <div class="body">
                <div class="top">
                    <q-group class="type" title-text="Deal Type">
                        <div style="padding-top: 9px">
                            <q-button>Cash Deal</q-button>
                            <q-button warn>Finance Deal</q-button>
                            <q-button>Lease Deal</q-button>
                        </div>
                    </q-group>
                    <div class="middle">
                        <q-field type="select" label="Business" value="Ricks Car Sales" tone="blue" style="--label: 58px; --box: 298px; --line: 13px"></q-field>
                        <div class="people">
                            <div class="buyers">
                                <div class="acts"><app-icon name="swap"></app-icon><q-button off style="width: 36px">Edit</q-button><q-button off style="width: 61px">Remove</q-button><q-button style="width: 109px">Add Buyer</q-button></div>
                                <q-field label="Buyer" style="--label: 58px; --box: 172px; --line: 12px"></q-field>
                                <div class="acts"><q-button off style="width: 36px">Edit</q-button><q-button off style="width: 61px">Remove</q-button><q-button style="width: 109px">Add Cobuyer</q-button></div>
                                <q-field label="Cobuyer" style="--label: 58px; --box: 172px; --line: 12px"></q-field>
                            </div>
                            <div class="status">
                                <label>Status</label>
                                <q-field name="Status" value="PENDING" style="--box: 92px; --align: center"></q-field>
                                <q-field type="select" name="New status" value="New: No Status" tone="blue" style="--box: 137px; margin: 5px 0 3px"></q-field>
                                <q-button style="width: 109px; height: 21px">Status Messages</q-button>
                            </div>
                        </div>
                    </div>
                    <q-group class="unit" title-text="Unit">
                        <div class="row"><q-field label="Stock #"></q-field><q-button off style="width: 37px; margin-left: 38px">Edit</q-button><q-button off style="width: 61px">Remove</q-button><q-button style="width: 87px">Add Unit</q-button></div>
                        <div class="row"><q-field label="Unit" style="--box: 345px"></q-field></div>
                        <div class="row"><q-field label="Type"></q-field><q-field label="Model Code" style="--label: 69px; --box: 144px; margin-left: 15px"></q-field></div>
                    </q-group>
                </div>
                <div class="work">
                    <q-group class="inputs" title-text="Deal Inputs">
                        <div class="list">${this.inputRows()}</div>
                        <q-field big label="Total Financed" value="$148.74" style="--label: 114px; --box: 104px; padding-left: 6px"></q-field>
                    </q-group>
                    <div class="right">
                        <q-group style="margin-top: 6px">
                            <div class="ids">
                                <q-field label="Deal #" value="270" style="--label: 36px; --box: 92px; --align: center"></q-field>
                                <q-field type="select" label="B.M." value="rick" tone="blue" style="--label: 27px; --box: 113px"></q-field>
                                <q-field type="select" label="S.M." tone="blue" style="--label: 26px; --box: 114px"></q-field>
                                <q-field type="select" label="S.P." tone="blue" style="--label: 22px; --box: 114px"></q-field>
                            </div>
                        </q-group>
                        <q-group style="margin-top: 6px">
                            <div class="bank">
                                <q-field type="select" label="Bank" value="BMO" tone="blue" style="--label: 92px; --box: 113px; --line: 12px"></q-field>
                                <q-field type="select" label="Pmts/Yr" value="26" tone="blue" style="--label: 48px; --box: 68px; --line: 14px"></q-field>
                                <q-field label="Term" value="60" tone="blue" style="--label: 32px; --box: 46px; --align: center; --line: 14px"></q-field>
                                <q-field label="Am." value="60" tone="blue" style="--label: 25px; --box: 46px; --align: center; --line: 14px"></q-field>
                                <q-field label="Rate" value="5.000" after="%" tone="blue" style="--label: 29px; --box: 46px; --align: center; --line: 14px"></q-field>
                            </div>
                        </q-group>
                        <q-group style="margin-top: 3px">
                            <div class="pay">
                                <q-field big calendar label="Deal Date" value="08/Feb/2023" tone="blue" style="--align: center; color: #a8000c"></q-field>
                                <q-field label-right label="Deferred" tone="blue" after="days" style="--label: 55px; --box: 58px"></q-field>
                                <q-field class="third" label="Balloon Pmt." tone="blue"></q-field>
                                <q-field big-value label="1st Pmt. Date" value="22/Feb/2023" style="--align: center"></q-field>
                                <div class="check"><label for="noint">No Int. Added</label><input id="noint" type="checkbox"></div>
                                <q-field class="third" label="Residual Pmt."></q-field>
                                <q-field big label="Payment" value="$1.29" style="--align: center"></q-field>
                                <q-button style="width: 99px; margin-left: 55px; font-size: 11px">Payment Print Ov</q-button>
                                <q-field class="third" type="select" label="Balloon Pmt. Due" value="1 Period Later" tone="blue" style="--line: 14px"></q-field>
                            </div>
                        </q-group>
                        <div class="lower">
                            <q-group class="ins" title-text="Insurances">
                                <div class="list">
                                    <div class="row"><app-icon name="goto"></app-icon><q-field type="select" tone="blue" label="Type" style="--box: 160px"></q-field></div>
                                    ${this.insuranceRow("Life", "$0.00")}
                                    ${this.insuranceRow("CI", "$0.00")}
                                    ${this.insuranceRow("A / H", "$0.00")}
                                    <div class="row"><q-field type="select" tone="blue" label="Retro" style="--label: 30px; --box: 91px; margin-left: 39px"></q-field></div>
                                    <div class="row"><q-field type="select" tone="blue" label="LOE Type" style="--box: 160px"></q-field></div>
                                    ${this.insuranceRow("LOE", "$0.00")}
                                </div>
                            </q-group>
                            <q-group class="fni" title-text="F&amp;I Products">
                                <app-icon class="over" name="goto" style="left: 103px; top: -4px"></app-icon>
                                <span class="over" style="left: 266px; top: 4px; font-size: 9px">Code</span>
                                <div class="list">${this.productRows()}</div>
                            </q-group>
                        </div>
                    </div>
                </div>
            </div>
            <footer>
                <button class="logo" style="width: 29px" aria-label="1K"><app-icon name="onek"></app-icon></button>
                <button class="logo plain" style="width: 40px" aria-label="Dealertrack"><app-icon name="dtlogo"></app-icon></button>
                <button class="logo" style="width: 29px" aria-label="RouteOne"><app-icon name="wave"></app-icon></button>
                <button class="logo" style="width: 52px" aria-label="iA"><app-icon name="iaelephant"></app-icon></button>
                <button class="logo" style="width: 29px" aria-label="Globe"><app-icon name="globe"></app-icon></button>
                <q-button style="width: 64px; margin-left: 18px">Roll Deal</q-button>
                <q-button style="width: 87px">Deliver Deal</q-button>
                <q-button off style="width: 110px; margin-left: 14px">Apply F&amp;I Menus</q-button>
                <q-button style="width: 57px">Notes</q-button>
                <span class="amount">Amount\nDisplay</span>
                <q-field type="select" name="Amount Display" value="Full Amount" tone="blue"></q-field>
            </footer>
        `;
    }
}
customElements.define("finance-dialog", FinanceDialog);
</script>
</body>
</html>
